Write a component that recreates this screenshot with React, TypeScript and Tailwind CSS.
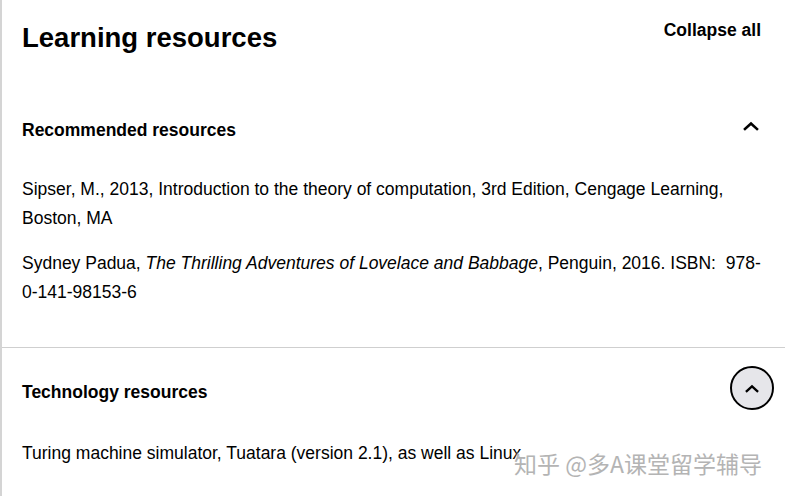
import React from 'react';

const Chevron = ({ className }: { className?: string }) => (
    <svg viewBox="0 0 16 10" className={className} fill="none" stroke="currentColor" strokeWidth="2.6" strokeLinecap="square">
        <polyline points="2,8 8,2.5 14,8" />
    </svg>
);

export default function App() {
    return (
        <div className="relative min-h-screen bg-white border-l-2 border-[#d4d4d4] text-black font-['Liberation_Sans',Arial,sans-serif] overflow-hidden">
            <header className="flex justify-between items-start pl-[20px] pr-[25px] pt-[22px]">
                <h1 className="text-[27.5px] leading-[32px] font-bold">Learning resources</h1>
                <button className="text-[17.5px] leading-[20px] font-bold -mt-[2px]">Collapse all</button>
            </header>

            <section className="pl-[20px] pr-[22px] mt-[47px]">
                <div className="flex items-center justify-between h-[56px]">
                    <h2 className="text-[17.5px] font-bold mt-[2px]">Recommended resources</h2>
                    <Chevron className="w-[16px] h-[10px] mr-[5px] -mt-[7px]" />
                </div>
                <div className="pt-[18px] pb-[40px] text-[17.5px] leading-[29px] space-y-[16px]">
                    <p>Sipser, M., 2013, Introduction to the theory of computation, 3rd Edition, Cengage Learning, Boston, MA</p>
                    <p>
                        Sydney Padua, <i>The Thrilling Adventures of Lovelace and Babbage</i>, Penguin, 2016. ISBN:&nbsp; 978-<wbr />0-141-98153-6
                    </p>
                </div>
            </section>

            <hr className="border-t border-[#cfcfcf] mr-[1px]" />

            <section className="pl-[20px] pr-[12px] pt-[18px]">
                <div className="flex items-center justify-between h-[44px]">
                    <h2 className="text-[17.5px] font-bold mt-[9px]">Technology resources</h2>
                    <button className="w-[44px] h-[44px] rounded-full border-2 border-black bg-[#e6e6ea] flex items-center justify-center">
                        <Chevron className="w-[14px] h-[9px]" />
                    </button>
                </div>
                <p className="mt-[29px] text-[17.5px] leading-[29px]">
                    Turing machine simulator, Tuatara (version 2.1), as well as Linux.
                </p>
            </section>

            <div className="absolute left-[512px] top-[448px] text-[23px] leading-[30px] text-[#b4b4b4] font-['Noto_Sans_CJK_SC',sans-serif] [text-shadow:0_0_2px_#ffffff,0_0_2px_#ffffff]">
                知乎 @多A课堂留学辅导
            </div>
        </div>
    );
}
